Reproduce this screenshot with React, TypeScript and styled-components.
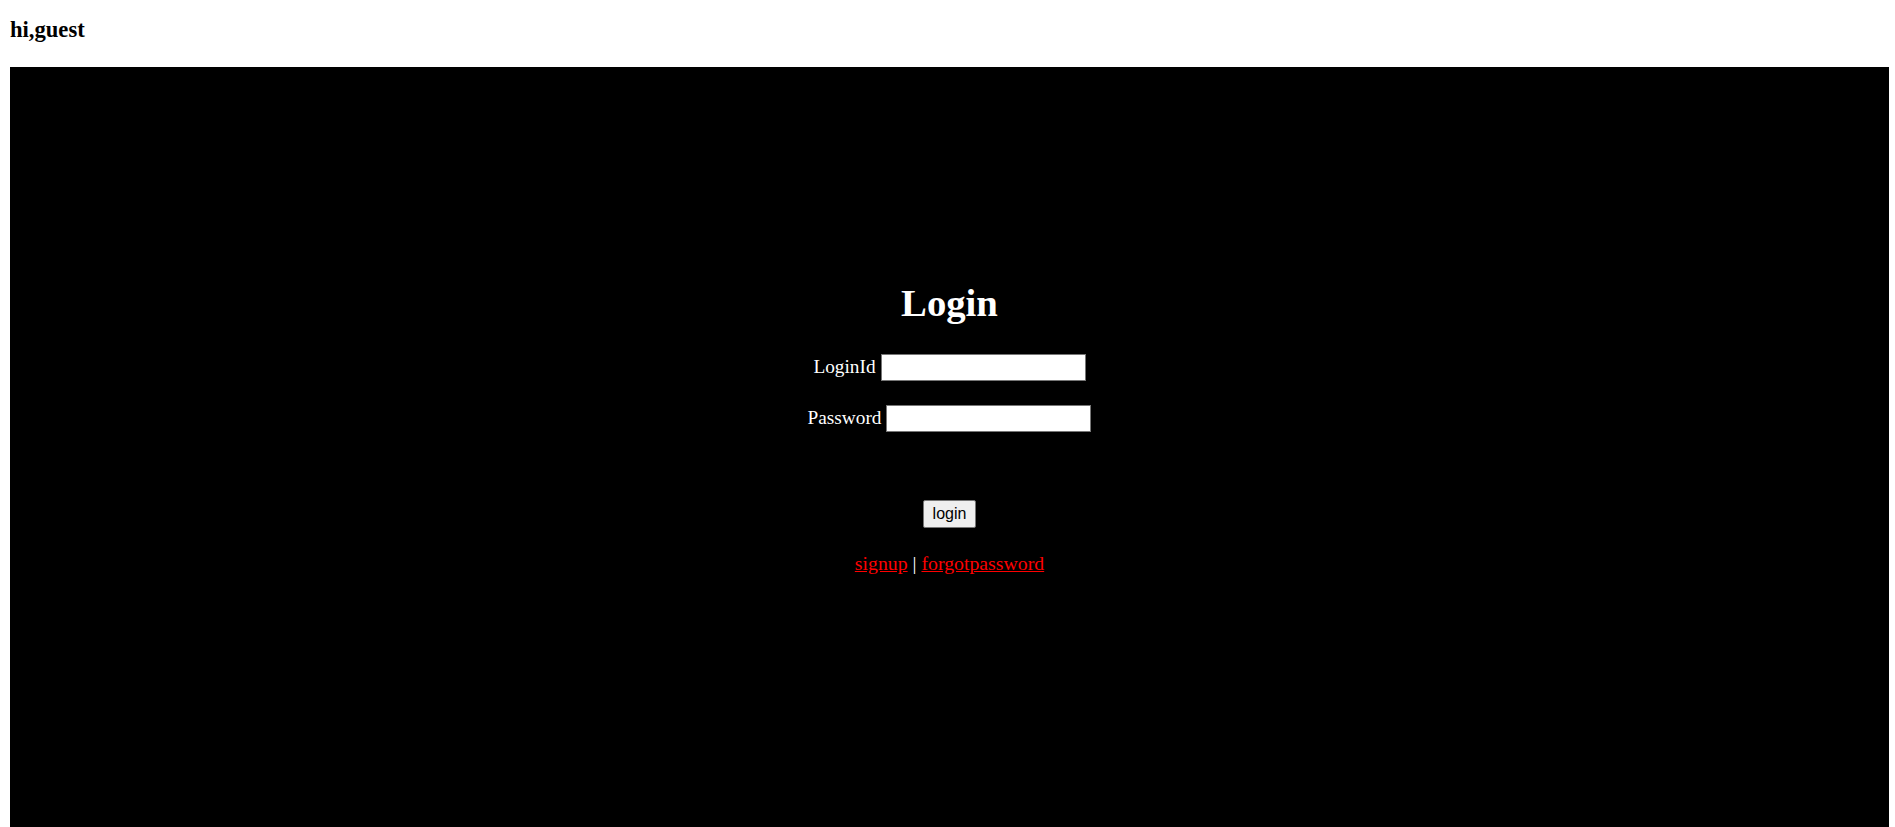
import styled, { createGlobalStyle } from "styled-components";

const GlobalStyle = createGlobalStyle`
  html, body {
    margin: 0;
    padding: 0;
    background: #fff;
  }

  body {
    padding: 0 6px 0 10px;
    font-family: "Liberation Serif", "Times New Roman", serif;
    font-size: 19.3px;
    color: #000;
    overflow: hidden;
  }
`;

const Header = styled.header`
  padding: 17px 0 24px;
`;

const Greeting = styled.h3`
  margin: 0;
  font-size: 22.6px;
  font-weight: bold;
  line-height: 26px;
`;

const Panel = styled.main`
  height: calc(100vh - 67px);
  background: #000;
  color: #fff;
  display: flex;
  flex-direction: column;
  align-items: center;
  padding-top: 214px;
  box-sizing: border-box;
`;

const Title = styled.h1`
  margin: 0 0 28px;
  font-size: 38.7px;
  font-weight: bold;
  line-height: 45px;
`;

const Field = styled.div<{ $gapBelow?: number }>`
  display: flex;
  align-items: center;
  gap: 5px;
  margin-bottom: ${(props) => props.$gapBelow ?? 0}px;
  line-height: 22px;
`;

const Label = styled.label`
  position: relative;
  top: -1px;
`;

const TextInput = styled.input`
  width: 205px;
  height: 27px;
  box-sizing: border-box;
  border: 1px solid #767676;
  border-radius: 0;
  padding: 1px 2px;
  background: #fff;
  font-family: "Liberation Sans", Arial, sans-serif;
  font-size: 16px;
  outline: none;
`;

const SubmitButton = styled.button`
  height: 28px;
  box-sizing: border-box;
  padding: 0 9px;
  margin-bottom: 24px;
  border: 1px solid #767676;
  border-radius: 2px;
  background: #efefef;
  color: #000;
  font-family: "Liberation Sans", Arial, sans-serif;
  font-size: 16px;
  line-height: 20px;
  cursor: pointer;
`;

const Links = styled.div`
  font-size: 19.8px;
  line-height: 22px;
  color: #fff;
`;

const RedLink = styled.a`
  color: #f00;
  text-decoration: underline;
`;

export default function App() {
  return (
    <>
      <GlobalStyle />
      <Header>
        <Greeting>hi,guest</Greeting>
      </Header>
      <Panel>
        <Title>Login</Title>
        <Field $gapBelow={24}>
          <Label htmlFor="loginId">LoginId</Label>
          <TextInput id="loginId" type="text" />
        </Field>
        <Field $gapBelow={68}>
          <Label htmlFor="password">Password</Label>
          <TextInput id="password" type="password" />
        </Field>
        <SubmitButton type="button">login</SubmitButton>
        <Links>
          <RedLink href="#signup">signup</RedLink> |{" "}
          <RedLink href="#forgot">forgotpassword</RedLink>
        </Links>
      </Panel>
    </>
  );
}
